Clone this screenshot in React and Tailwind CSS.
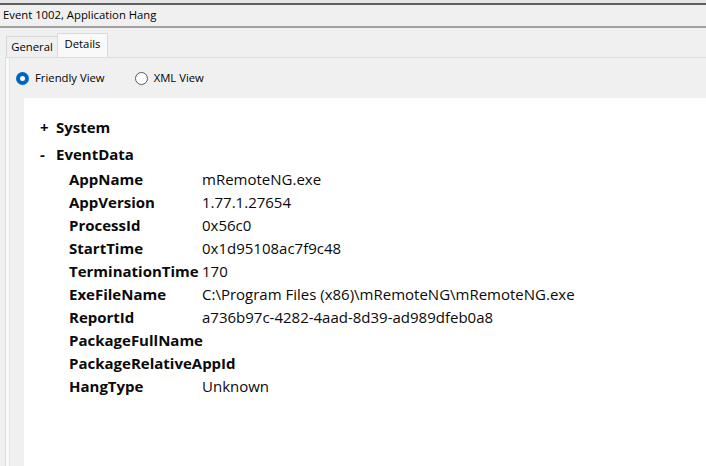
import React from 'react';

const rows = [
  ['AppName', 'mRemoteNG.exe'],
  ['AppVersion', '1.77.1.27654'],
  ['ProcessId', '0x56c0'],
  ['StartTime', '0x1d95108ac7f9c48'],
  ['TerminationTime', '170'],
  ['ExeFileName', 'C:\\Program Files (x86)\\mRemoteNG\\mRemoteNG.exe'],
  ['ReportId', 'a736b97c-4282-4aad-8d39-ad989dfeb0a8'],
  ['PackageFullName', ''],
  ['PackageRelativeAppId', ''],
  ['HangType', 'Unknown'],
];

const Radio = ({ checked, label }) => (
  <label className="flex items-center gap-[6px]">
    {checked ? (
      <span className="flex h-[13px] w-[13px] items-center justify-center rounded-full bg-[#0067c0]">
        <span className="h-[5px] w-[5px] rounded-full bg-white" />
      </span>
    ) : (
      <span className="h-[13px] w-[13px] rounded-full border border-[#5a5a5a] bg-white" />
    )}
    <span>{label}</span>
  </label>
);

const App = () => {
  return (
    <div className="flex h-[466px] w-[706px] flex-col overflow-hidden bg-[#f0f0f0] text-[11.3px] text-[#000] [font-family:'Open_Sans','Noto_Sans',sans-serif]">
      {/* Title */}
      <div className="h-[3px] bg-[#e6e6e6]" />
      <div className="h-[2px] bg-[#5f5f5f]" />
      <div className="flex h-[21px] items-center pl-[3px] text-[11.3px]">Event 1002, Application Hang</div>
      <div className="h-[2px] bg-[#a0a0a0]" />

      {/* Tabs */}
      <div className="mt-[6px] flex h-[23px] items-end pl-[6px]">
        <div className="flex h-[21px] w-[52px] items-center justify-center border border-b-0 border-[#d9d9d9] bg-[#f0f0f0]">
          General
        </div>
        <div className="-ml-px flex h-[24px] w-[51px] items-center justify-center border border-b-0 border-[#d9d9d9] bg-[#f9f9f9] pb-[2px]">
          Details
        </div>
      </div>

      {/* Panel */}
      <div className="ml-[5px] flex flex-1 flex-col border-l border-t border-[#dcdcdc]">
        <div className="flex flex-1 flex-col border-l-[3px] border-[#f9f9f9]">
          <div className="flex flex-1 flex-col border-l border-[#e3e3e3]">
            <div className="flex h-[40px] items-center gap-[30px] pl-[6px]">
              <Radio checked label="Friendly View" />
              <Radio label="XML View" />
            </div>
            <div className="ml-[14px] flex-1 bg-white pl-[16px] pt-[18px] text-[15px] text-[#0a0a0a]">
              <div className="flex h-[23px] items-center font-bold">
                <span className="w-[16px]">+</span>
                <span>System</span>
              </div>
              <div className="mt-[4px] flex h-[23px] items-center font-bold">
                <span className="w-[16px]">-</span>
                <span>EventData</span>
              </div>
              <div className="mt-[2px] pl-[29px]">
                {rows.map(([key, value]) => (
                  <div key={key} className="flex h-[23px] items-center whitespace-nowrap">
                    <span className="w-[133px] shrink-0 font-bold">{key}</span>
                    <span>{value}</span>
                  </div>
                ))}
              </div>
            </div>
          </div>
        </div>
      </div>
    </div>
  );
};

export default App;
